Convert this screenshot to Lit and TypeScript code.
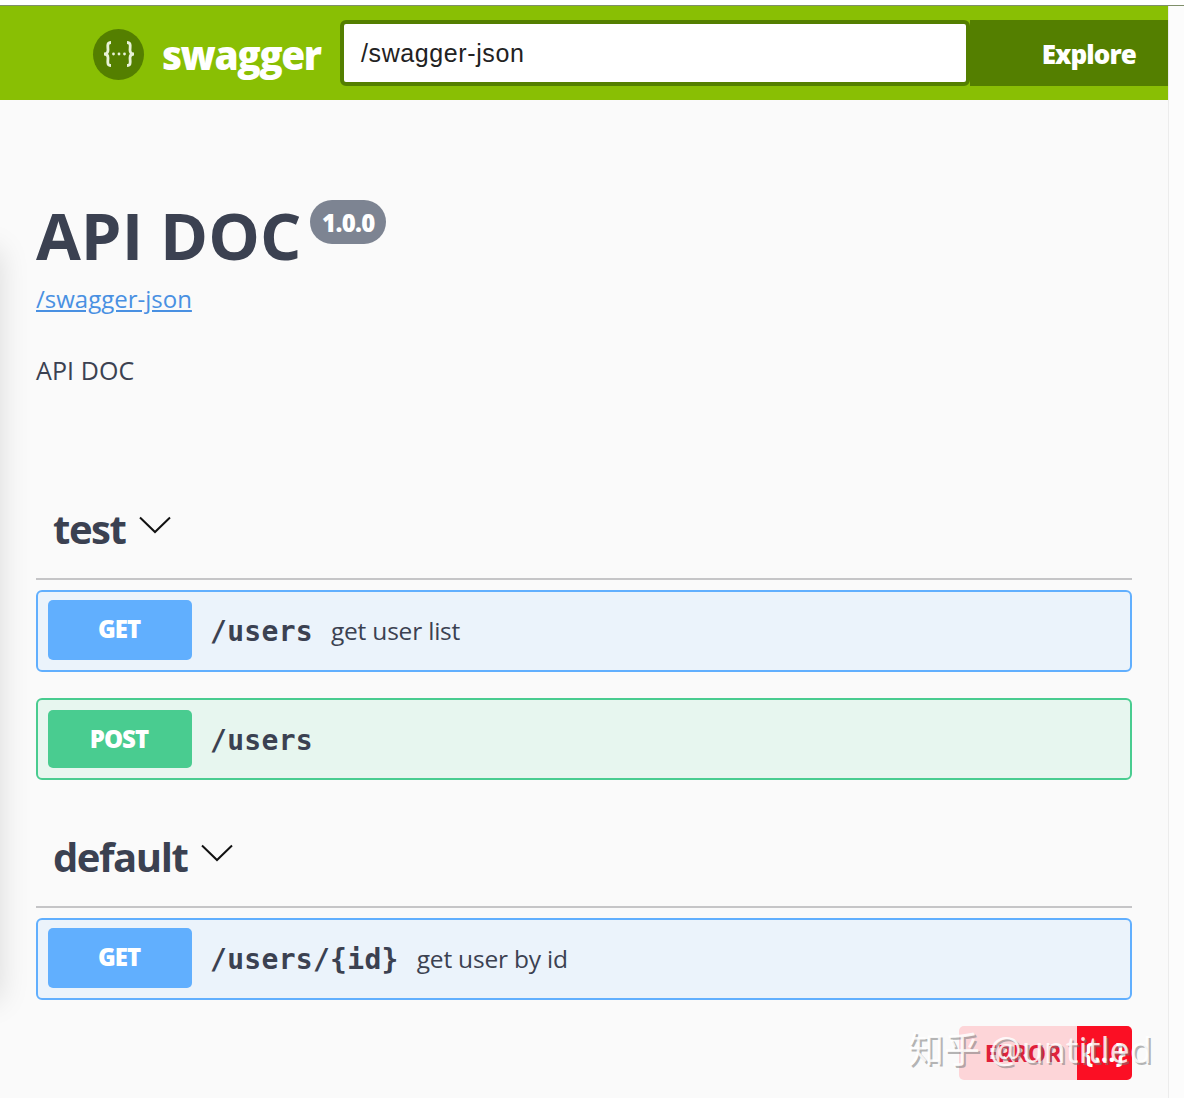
import { LitElement, html, css } from "lit";
import { customElement } from "lit/decorators.js";

const chevron = html`<svg class="chev" width="32" height="18" viewBox="0 0 32 18" fill="none" stroke="#111" stroke-width="2"><path d="M1 1.5 L16 16 L31 1.5"/></svg>`;

@customElement("app-root")
export class AppRoot extends LitElement {
  static styles = css`
    :host { display: block; position: relative; width: 1184px; height: 1098px; overflow: hidden; background: #fcfcfc; font-family: "Open Sans", sans-serif; color: #3b4151; }
    .page { width: 1168px; height: 1098px; border-right: 1px solid #ececec; box-sizing: content-box; background: #fafafa; }
    .topgap { height: 5px; background: #fff; width: 1184px; border-bottom: 1px solid #7f8f6a; }
    .bar { height: 94px; background: #89bf04; display: flex; align-items: center; padding-left: 93px; box-sizing: border-box; }
    .logo { width: 51px; height: 51px; margin-top: 2px; border-radius: 50%; background: #547f00; display: flex; align-items: center; justify-content: center; color: #e8f2d8; flex: none; }
    .brand { font-family: "Open Sans", sans-serif; font-weight: 800; font-size: 40px; color: #fff; margin-left: 18px; width: 160px; flex: none; letter-spacing: -1.5px; padding-top: 3px; transform: scaleX(.97); transform-origin: left; white-space: nowrap; }
    .search { display: flex; margin-left: 18px; flex: 1; height: 66px; align-items: stretch; }
    .input { width: 630px; box-sizing: border-box; border: 4px solid #547f00; border-radius: 6px; background: #fff; font-size: 25px; letter-spacing: .6px; color: #222; display: flex; align-items: center; padding: 0 0 0 17px; font-family: "Liberation Sans", Arial, sans-serif; }
    .explore { flex: 1; background: #547f00; color: #fff; font-weight: 800; font-size: 26px; display: flex; align-items: center; justify-content: flex-end; padding: 2px 32px 0 0; letter-spacing: -.9px; }
    main { padding: 96px 36px 0; }
    .title { display: flex; align-items: flex-start; height: 78px; }
    h1 { margin: 0; font-size: 65px; line-height: 78px; font-weight: 700; color: #3b4151; letter-spacing: 0; }
    .ver { margin: 4px 0 0 9px; background: #7d8492; color: #fff; font-weight: 800; font-size: 24px; height: 44px; line-height: 46px; width: 76px; text-align: center; border-radius: 22px; letter-spacing: -.7px; }
    .link { display: block; margin-top: 8px; font-size: 24px; line-height: 33px; color: #4990e2; text-decoration: underline; }
    .desc { margin-top: 38px; font-size: 25px; line-height: 35px; letter-spacing: .1px; }
    .tag { display: flex; align-items: center; height: 98px; border-bottom: 2px solid #c5c5c7; padding: 0 0 4px 17px; box-sizing: border-box; }
    .tag.first { margin-top: 94px; }
    .tag.second { margin-top: 30px; }
    .tag b { font-size: 40px; font-weight: 700; letter-spacing: -1.45px; }
    .op { height: 82px; margin-top: 10px; box-sizing: border-box; border: 2px solid; border-radius: 6px; display: flex; align-items: center; padding: 0 10px; }
    .op + .op { margin-top: 26px; }
    .get { background: #ebf3fb; border-color: #61affe; }
    .post { background: #e7f6ef; border-color: #49cc90; }
    .m { width: 144px; height: 60px; box-sizing: border-box; padding: 0 2px 4px 0; border-radius: 5px; color: #fff; font-weight: 800; font-size: 24px; display: flex; align-items: center; justify-content: center; letter-spacing: -1px; flex: none; }
    .get .m { background: #61affe; margin-top: -2px; }
    .post .m { background: #49cc90; height: 58px; padding-bottom: 2px; }
    .path { font-family: "DejaVu Sans Mono", monospace; font-weight: 700; font-size: 28px; margin-left: 18px; letter-spacing: .3px; color: #3b4151; }
    .post .path { padding-top: 2px; }
    .sum { margin-left: 18px; margin-top: -2px; font-size: 24.5px; letter-spacing: -.2px; color: #3b4151; }
    .chev { margin-left: 14px; margin-top: -6px; }
    .shadow { position: absolute; left: -40px; top: 250px; width: 40px; height: 750px; box-shadow: 0 0 30px rgba(0,0,0,.13); pointer-events: none; }
    .err { position: absolute; left: 959px; top: 1026px; width: 173px; height: 54px; border-radius: 5px; background: #fdd5d8; display: flex; overflow: hidden; }
    .err span { flex: 1; color: #e0203a; font-weight: 700; font-size: 23px; text-align: center; line-height: 54px; padding-left: 10px; }
    .err i { width: 55px; background: #fb0f24; color: #fff; font-style: normal; font-weight: 700; font-size: 26px; text-align: center; line-height: 52px; }
    .wm { position: absolute; left: 908px; top: 1025px; font-size: 36px; line-height: 50px; white-space: nowrap; font-family: "Open Sans", "Noto Sans CJK SC", sans-serif; color: rgba(255,255,255,.85); text-shadow: 2px 2px 0 rgba(120,120,120,.55); }
  `;

  render() {
    return html`
      <div class="topgap"></div>
      <div class="page">
        <header class="bar">
          <div class="logo">
            <svg width="32" height="26" viewBox="0 0 32 26" fill="none" stroke="currentColor" stroke-width="2.8">
              <path d="M8 1.5 C3.5 1.5 5 6 5 9 C5 11 4 13 1 13 C4 13 5 15 5 17 C5 20 3.5 24.5 8 24.5"/>
              <path d="M24 1.5 C28.5 1.5 27 6 27 9 C27 11 28 13 31 13 C28 13 27 15 27 17 C27 20 28.5 24.5 24 24.5"/>
              <circle cx="10.5" cy="13" r="1.4" fill="currentColor" stroke="none"/>
              <circle cx="16" cy="13" r="1.4" fill="currentColor" stroke="none"/>
              <circle cx="21.5" cy="13" r="1.4" fill="currentColor" stroke="none"/>
            </svg>
          </div>
          <div class="brand">swagger</div>
          <div class="search">
            <div class="input">/swagger-json</div>
            <div class="explore">Explore</div>
          </div>
        </header>
        <main>
          <div class="title"><h1>API DOC</h1><span class="ver">1.0.0</span></div>
          <a class="link">/swagger-json</a>
          <div class="desc">API DOC</div>
          <div class="tag first"><b>test</b>${chevron}</div>
          <div class="op get"><span class="m">GET</span><span class="path">/users</span><span class="sum">get user list</span></div>
          <div class="op post"><span class="m">POST</span><span class="path">/users</span></div>
          <div class="tag second"><b>default</b>${chevron}</div>
          <div class="op get"><span class="m">GET</span><span class="path">/users/{id}</span><span class="sum">get user by id</span></div>
        </main>
      </div>
      <div class="shadow"></div>
      <div class="err"><span>ERROR</span><i>{...}</i></div>
      <div class="wm">知乎 @untitled</div>
    `;
  }
}
